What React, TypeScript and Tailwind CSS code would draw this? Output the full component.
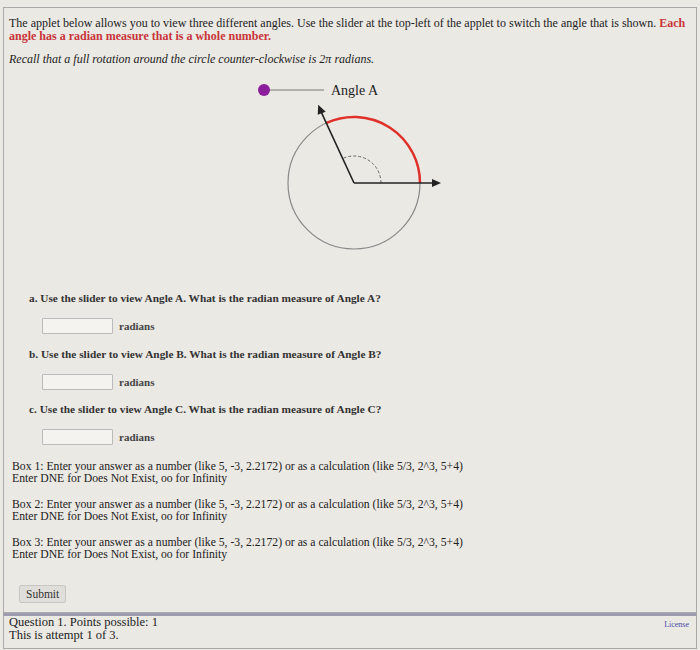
import React from 'react'

const serif = { fontFamily: '"Liberation Serif", "Times New Roman", serif' }

function AngleApplet() {
  const cx = 123
  const cy = 111
  const r = 66
  const t = 2
  const ex = cx + r * Math.cos(t)
  const ey = cy - r * Math.sin(t)
  const rx = cx + 86 * Math.cos(t)
  const ry = cy - 86 * Math.sin(t)
  const sr = 27
  const sx = cx + sr * Math.cos(t)
  const sy = cy - sr * Math.sin(t)
  return (
    <svg width="240" height="185" viewBox="0 0 240 185" className="block">
      <line x1="33" y1="18" x2="93" y2="18" stroke="#777" strokeWidth="1" />
      <circle cx="33" cy="18" r="6" fill="#8b1f9b" />
      <text x="100" y="23" fontSize="14" fill="#222" style={serif}>
        Angle A
      </text>
      <circle cx={cx} cy={cy} r={r} fill="none" stroke="#888" strokeWidth="1.2" />
      <path
        d={`M ${cx + r} ${cy} A ${r} ${r} 0 0 0 ${ex} ${ey}`}
        fill="none"
        stroke="#e0302a"
        strokeWidth="2.5"
      />
      <path
        d={`M ${cx + sr} ${cy} A ${sr} ${sr} 0 0 0 ${sx} ${sy}`}
        fill="none"
        stroke="#666"
        strokeWidth="1"
        strokeDasharray="3 2"
      />
      <line x1={cx} y1={cy} x2={203} y2={cy} stroke="#222" strokeWidth="1.6" />
      <polygon points={`210,${cy} 201,${cy - 4} 201,${cy + 4}`} fill="#222" />
      <line x1={cx} y1={cy} x2={rx + 2} y2={ry + 5} stroke="#222" strokeWidth="1.6" />
      <polygon
        points={`${rx},${ry} ${rx + 7.5},${ry + 7} ${rx - 0.5},${ry + 10}`}
        fill="#222"
      />
    </svg>
  )
}

function Part({ label }: { label: string }) {
  return (
    <div>
      <p className="ml-[20px] text-[11.3px] font-bold text-[#333] leading-[14px]">{label}</p>
      <div className="flex items-center gap-[6px] ml-[33px] mt-[13px]">
        <div className="w-[71px] h-[16px] border border-[#bbb] bg-[#f4f3f0] rounded-[1px]" />
        <span className="text-[11px] font-bold text-[#444]">radians</span>
      </div>
    </div>
  )
}

function Hint({ n }: { n: number }) {
  return (
    <p className="text-[11.7px] text-[#222] leading-[12px]">
      Box {n}: Enter your answer as a number (like 5, -3, 2.2172) or as a calculation (like 5/3, 2^3, 5+4)
      <br />
      Enter DNE for Does Not Exist, oo for Infinity
    </p>
  )
}

export default function App() {
  return (
    <div className="w-[700px] h-[650px] bg-[#ebe9e4] pt-[7px] overflow-hidden" style={serif}>
      <div className="mx-[3px] border border-[#a9a9a9] h-[606px] px-[5px] pt-[9px]">
        <p className="text-[12px] leading-[13px] text-[#222]">
          The applet below allows you to view three different angles. Use the slider at the top-left of the
          applet to switch the angle that is shown. <span className="font-bold text-[#c8343a]">Each</span>
          <br />
          <span className="font-bold text-[#c8343a]">angle has a radian measure that is a whole number.</span>
        </p>
        <p className="mt-[7px] text-[12px] italic text-[#222]">
          Recall that a full rotation around the circle counter-clockwise is 2π radians.
        </p>
        <div className="flex justify-center mt-[4px] ml-[2px]">
          <AngleApplet />
        </div>
        <div className="flex flex-col gap-[12px] mt-[34px]">
          <Part label="a. Use the slider to view Angle A. What is the radian measure of Angle A?" />
          <Part label="b. Use the slider to view Angle B. What is the radian measure of Angle B?" />
          <Part label="c. Use the slider to view Angle C. What is the radian measure of Angle C?" />
        </div>
        <div className="flex flex-col gap-[14px] mt-[15px] ml-[3px]">
          <Hint n={1} />
          <Hint n={2} />
          <Hint n={3} />
        </div>
        <button className="mt-[24px] ml-[10px] px-[6px] h-[18px] text-[11.5px] text-[#333] bg-[#e0deda] border border-[#c9c7c3] rounded-[2px]">
          Submit
        </button>
      </div>
      <div className="mx-[3px] border border-[#a9a9a9] border-t-[3px] border-t-[#9c9cae] h-[36px] px-[5px] pt-0 flex justify-between">
        <div className="text-[12.5px] leading-[13px] text-[#222]">
          <p>Question 1. Points possible: 1</p>
          <p>This is attempt 1 of 3.</p>
        </div>
        <span className="text-[8px] text-[#4a4aa8] mt-[3px] mr-[2px]">License</span>
      </div>
    </div>
  )
}
